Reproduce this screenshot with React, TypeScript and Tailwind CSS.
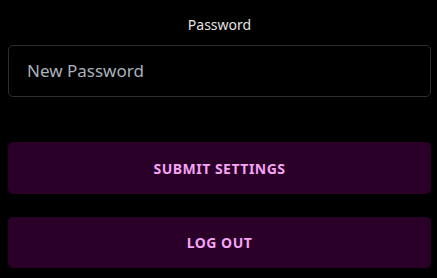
import React from "react";

export default function App() {
  return (
    <div className="w-[437px] h-[278px] bg-black pl-2 pr-[6px] font-['Noto_Sans',sans-serif] overflow-hidden">
      <div className="pt-[15px] text-center text-[14px] leading-[20px] text-[#e2e2e2]">Password</div>
      <input
        type="password"
        placeholder="New Password"
        className="mt-[10px] block w-full h-[52px] rounded-[5px] border border-[#2e2e2e] bg-black px-[18px] pb-[2px] text-[17px] text-[#ddd] placeholder:text-[#aab2bb] outline-none"
      />
      <button className="mt-[45px] flex w-full h-[52px] items-center justify-center rounded-[5px] bg-[#2a0029] text-[14px] font-bold tracking-[0.5px] text-[#f4a4f4]">
        SUBMIT SETTINGS
      </button>
      <button className="mt-[23px] flex w-full h-[51px] items-center justify-center rounded-[5px] bg-[#2a0029] text-[14px] font-bold tracking-[0.5px] text-[#f4a4f4]">
        LOG OUT
      </button>
    </div>
  );
}
